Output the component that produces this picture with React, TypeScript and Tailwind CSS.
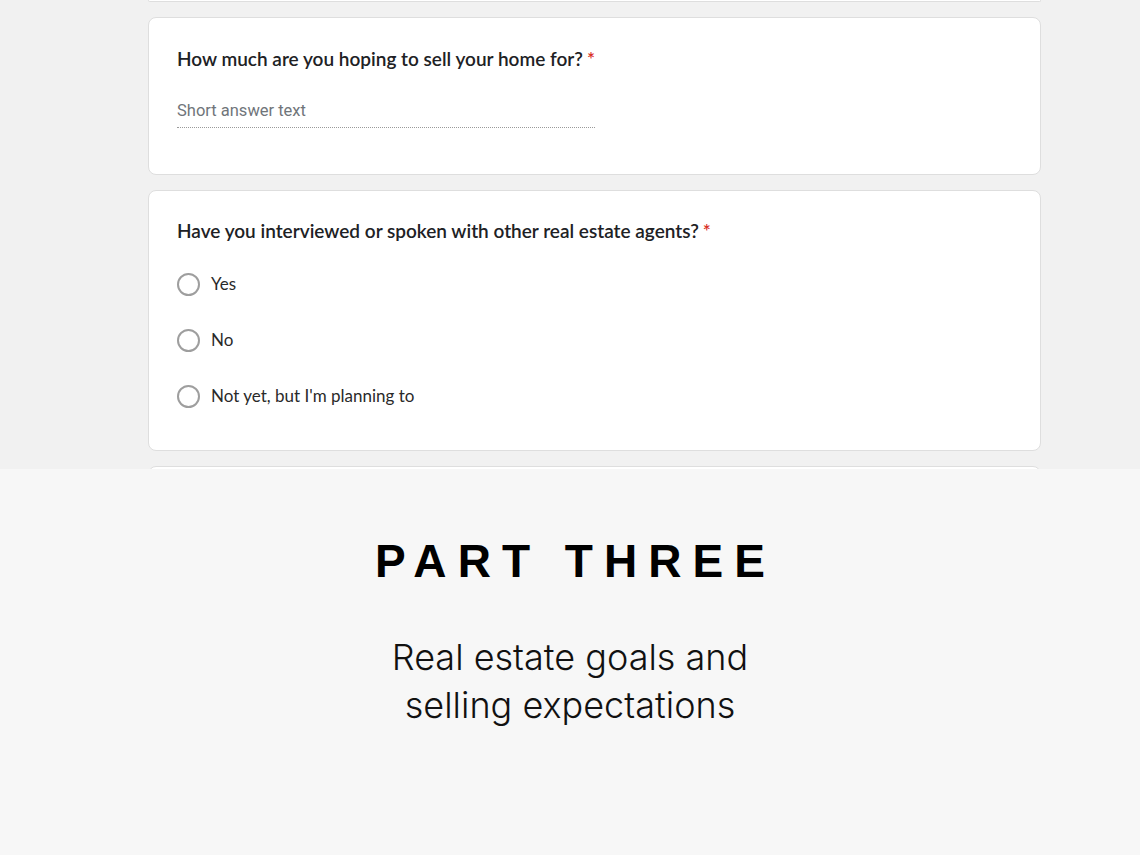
const options = ["Yes", "No", "Not yet, but I'm planning to"];

function Radio({ label }: { label: string }) {
  return (
    <div className="flex items-center h-[56px]">
      <span className="w-[23px] h-[23px] rounded-full border-2 border-[#9e9e9e] mr-[11px] shrink-0"></span>
      <span className="text-[17px] text-[#2a2a2a]" style={{ fontFamily: "Lato, sans-serif" }}>
        {label}
      </span>
    </div>
  );
}

export default function App() {
  const q = { fontFamily: "Lato, 'Open Sans', sans-serif" };
  return (
    <div className="w-[1140px] h-[855px] overflow-hidden bg-[#f7f7f7]">
      {/* form screenshot */}
      <div className="h-[469px] overflow-hidden bg-[#f1f1f1]">
        <div className="ml-[148px] w-[893px] flex flex-col gap-[15px]">
          <div className="h-[2px] bg-white border-x border-b border-[#dedede] rounded-b-lg"></div>

          <div className="h-[158px] bg-white border border-[#dedede] rounded-lg px-[28px] pt-[28px]">
            <p className="text-[19px] font-semibold text-[#202124] leading-[26px]" style={q}>
              How much are you hoping to sell your home for?
              <span className="text-[#d93025] ml-[4px]">*</span>
            </p>
            <div className="mt-[26px] w-[418px] border-b border-dotted border-[#9a9a9a] pb-[3px]">
              <span className="text-[16.5px] text-[#70757a]" style={{ fontFamily: "Roboto, sans-serif" }}>
                Short answer text
              </span>
            </div>
          </div>

          <div className="h-[261px] bg-white border border-[#dedede] rounded-lg px-[28px] pt-[27px]">
            <p className="text-[19px] font-semibold text-[#202124] leading-[26px]" style={q}>
              Have you interviewed or spoken with other real estate agents?
              <span className="text-[#d93025] ml-[4px]">*</span>
            </p>
            <div className="mt-[12px] flex flex-col">
              {options.map((o) => (
                <Radio key={o} label={o} />
              ))}
            </div>
          </div>

          <div className="h-[20px] bg-white border border-[#dedede] rounded-t-lg"></div>
        </div>
      </div>

      {/* section title */}
      <div className="flex flex-col items-center pt-[64px]">
        <h1
          className="text-[46px] font-bold tracking-[0.24em] text-black leading-[56px] pl-[0.24em]"
          style={{ fontFamily: "'Liberation Sans', Arial, sans-serif" }}
        >
          PART THREE
        </h1>
        <p
          className="mt-[44px] text-[36px] text-[#111] leading-[48px] text-center"
          style={{ fontFamily: "Inter, 'Noto Sans', sans-serif", fontWeight: 300 }}
        >
          Real estate goals and
          <br />
          selling expectations
        </p>
      </div>
    </div>
  );
}
